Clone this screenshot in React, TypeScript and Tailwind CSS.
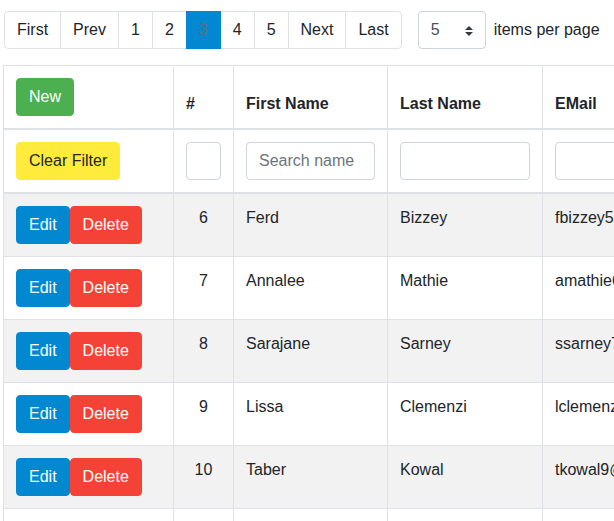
import { useState } from "react";

type Person = {
  id: number;
  first: string;
  last: string;
  email: string;
};

const PEOPLE: Person[] = [
  { id: 6, first: "Ferd", last: "Bizzey", email: "fbizzey5@ucoz.ru" },
  { id: 7, first: "Annalee", last: "Mathie", email: "amathie6@wired.com" },
  { id: 8, first: "Sarajane", last: "Sarney", email: "ssarney7@usda.gov" },
  { id: 9, first: "Lissa", last: "Clemenzi", email: "lclemenzi8@cnet.com" },
  { id: 10, first: "Taber", last: "Kowal", email: "tkowal9@hibu.com" },
  { id: 11, first: "Dorie", last: "Pyle", email: "dpylea@nature.com" },
];

const PAGES = ["First", "Prev", "1", "2", "3", "4", "5", "Next", "Last"];

export default function App() {
  const [page, setPage] = useState("3");
  const [perPage, setPerPage] = useState("5");

  return (
    <div className="w-screen h-screen overflow-hidden bg-white text-[#212529] text-base font-['Liberation_Sans',Arial,sans-serif]">
      {/* Pager */}
      <div className="flex items-center mt-[11px] ml-[4px]">
        <div className="flex">
          {PAGES.map((p, i) => (
            <button
              key={p}
              onClick={() => setPage(p)}
              className={[
                "h-[38px] px-3 leading-5 border",
                i > 0 ? "-ml-px" : "",
                i === 0 ? "rounded-l" : "",
                i === PAGES.length - 1 ? "rounded-r" : "",
                page === p
                  ? "bg-[#0288d1] border-[#0288d1] text-[#5f6f80] relative z-10"
                  : "bg-white border-[#dee2e6] text-[#212529]",
              ].join(" ")}
            >
              {p}
            </button>
          ))}
        </div>

        <div className="relative ml-[16px]">
          <select
            value={perPage}
            onChange={(e) => setPerPage(e.target.value)}
            className="appearance-none w-[68px] h-[38px] pl-3 border border-[#ced4da] rounded bg-white text-[#495057] outline-none"
          >
            <option value="5">5</option>
            <option value="10">10</option>
            <option value="20">20</option>
          </select>
          {/* up/down caret */}
          <svg
            className="absolute right-[13px] top-[15px] pointer-events-none"
            width="8"
            height="10"
            viewBox="0 0 8 10"
          >
            <path d="M4 0 L8 4 H0 Z M4 10 L0 6 H8 Z" fill="#343a40" />
          </svg>
        </div>
        <span className="ml-2">items per page</span>
      </div>

      {/* Grid */}
      <table className="mt-4 ml-[3px] border-collapse table-fixed w-[900px] border border-[#dee2e6]">
        <thead>
          <tr>
            <th className="w-[170px] p-3 align-bottom text-left border border-b-2 border-[#dee2e6]">
              <button className="h-[38px] px-3 rounded border border-[#4caf50] bg-[#4caf50] text-white font-normal">New</button>
            </th>
            <th className="w-[60px] p-3 align-bottom text-left font-bold border border-b-2 border-[#dee2e6]">#</th>
            <th className="w-[154px] p-3 align-bottom text-left font-bold border border-b-2 border-[#dee2e6]">First Name</th>
            <th className="w-[155px] p-3 align-bottom text-left font-bold border border-b-2 border-[#dee2e6]">Last Name</th>
            <th className="p-3 align-bottom text-left font-bold border border-b-2 border-[#dee2e6]">EMail</th>
          </tr>
          <tr>
            <td className="p-3 border border-b-2 border-[#dee2e6]">
              <button className="h-[38px] px-3 rounded border border-[#ffeb3b] bg-[#ffeb3b] text-[#212529]">Clear Filter</button>
            </td>
            <td className="p-3 border border-b-2 border-[#dee2e6]">
              <input className="block w-full h-[38px] border border-[#ced4da] rounded outline-none" />
            </td>
            <td className="p-3 border border-b-2 border-[#dee2e6]">
              <input
                placeholder="Search name"
                className="block w-full h-[38px] px-3 border border-[#ced4da] rounded outline-none placeholder:text-[#6c757d]"
              />
            </td>
            <td className="p-3 border border-b-2 border-[#dee2e6]">
              <input className="block w-full h-[38px] px-3 border border-[#ced4da] rounded outline-none" />
            </td>
            <td className="p-3 border border-b-2 border-[#dee2e6]">
              <input className="block w-[240px] h-[38px] px-3 border border-[#ced4da] rounded outline-none" />
            </td>
          </tr>
        </thead>
        <tbody>
          {PEOPLE.map((r, i) => (
            <tr key={r.id} className={i % 2 === 0 ? "bg-[#f2f2f2]" : "bg-white"}>
              <td className="p-3 align-top border border-[#dee2e6]">
                <div className="flex">
                  <button className="h-[38px] px-3 rounded border border-[#0288d1] bg-[#0288d1] text-white">Edit</button>
                  <button className="h-[38px] px-3 rounded border border-[#f44336] bg-[#f44336] text-white">Delete</button>
                </div>
              </td>
              <td className="p-3 align-top text-center leading-6 border border-[#dee2e6]">{r.id}</td>
              <td className="p-3 align-top leading-6 border border-[#dee2e6]">{r.first}</td>
              <td className="p-3 align-top leading-6 border border-[#dee2e6]">{r.last}</td>
              <td className="p-3 align-top leading-6 border border-[#dee2e6] whitespace-nowrap">{r.email}</td>
            </tr>
          ))}
        </tbody>
      </table>
    </div>
  );
}
